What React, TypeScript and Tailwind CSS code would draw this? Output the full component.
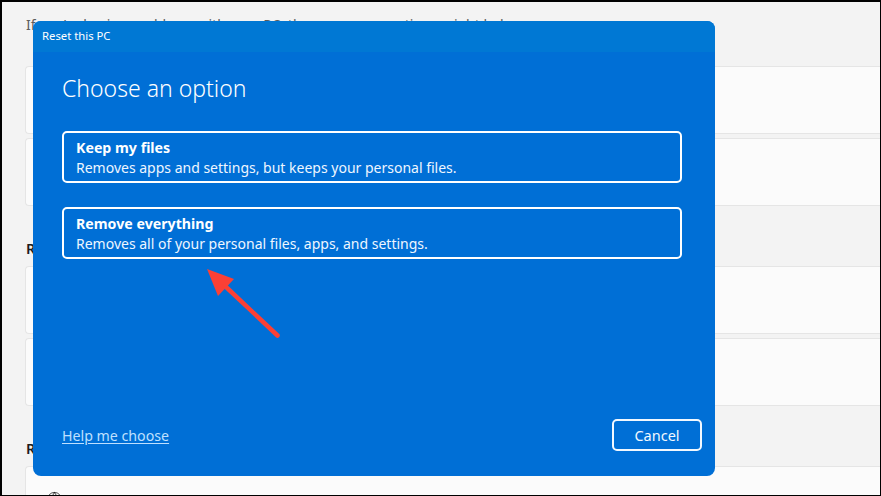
import { Globe } from "lucide-react";

const FONT = "font-['Noto_Sans','Open_Sans',sans-serif]";

function SettingsCard({ className = "" }: { className?: string }) {
  return <div className={`h-[68px] rounded-l-[4px] border border-r-0 border-[#e5e5e5] bg-[#fbfbfb] ${className}`} />;
}

function OptionButton({ title, description }: { title: string; description: string }) {
  return (
    <button
      type="button"
      className="flex h-[52px] w-full flex-col justify-center rounded-[5px] border-2 border-white px-[12px] pt-[2px] text-left text-white"
    >
      <span className="text-[14.2px] leading-[20px] font-bold">{title}</span>
      <span className="text-[14px] leading-[20px] text-[#eef6ff]">{description}</span>
    </button>
  );
}

export default function App() {
  return (
    <div className={`relative h-[496px] w-[881px] overflow-hidden bg-black pt-[2px] pb-px pl-[2px] pr-px ${FONT}`}>
      {/* settings page behind the dialog */}
      <div className="h-full overflow-hidden bg-[#f3f3f3] pl-[23px]">
        <p className="pt-[13px] pb-[32px] pl-px text-[14px] leading-[19px] whitespace-nowrap text-[#5c5c5c]">
          If you're having problems with your PC, these recovery options might help.
        </p>
        <div className="flex flex-col gap-[4px]">
          <SettingsCard />
          <SettingsCard />
        </div>
        <p className="pt-[32px] pb-[8px] pl-px text-[14.5px] leading-[20px] font-semibold text-[#1b1b1b]">Recovery</p>
        <div className="flex flex-col gap-[4px]">
          <SettingsCard />
          <SettingsCard />
        </div>
        <p className="pt-[32px] pb-[8px] pl-px text-[14.5px] leading-[20px] font-semibold text-[#1b1b1b]">Related support</p>
        <div className="h-[68px] rounded-l-[4px] border border-r-0 border-[#e5e5e5] bg-[#fbfbfb] pt-[24px] pl-[20px]">
          <Globe size={17} strokeWidth={1.1} className="text-[#1b1b1b]" />
        </div>
      </div>

      {/* Reset this PC dialog */}
      <div className="absolute top-[21px] left-[33px] flex h-[455px] w-[682px] flex-col overflow-hidden rounded-[8px] bg-[#006fd6] text-white">
        <div className="flex h-[31px] shrink-0 items-center bg-[#0078d4] pl-[9px] text-[11.3px]">Reset this PC</div>
        <div className="flex min-h-0 flex-1 flex-col pt-[20px] pr-[13px] pb-[25px] pl-[29px]">
          <h1 className="text-[23px] leading-[32px] font-light">Choose an option</h1>
          <div className="mt-[27px] flex flex-col gap-[24px] pr-[20px]">
            <OptionButton title="Keep my files" description="Removes apps and settings, but keeps your personal files." />
            <OptionButton
              title="Remove everything"
              description="Removes all of your personal files, apps, and settings."
            />
          </div>
          <div className="mt-auto flex items-center justify-between">
            <a className="pt-[2px] text-[14.2px] leading-[18px] text-[#bfe0ff] underline underline-offset-2">Help me choose</a>
            <button
              type="button"
              className="h-[32px] w-[90px] rounded-[5px] border-2 border-[#f2f8ff] pt-[2px] text-[14.5px] text-[#f2f8ff]"
            >
              Cancel
            </button>
          </div>
        </div>
      </div>

      {/* red annotation arrow */}
      <svg className="absolute top-[260px] left-[200px]" width="90" height="85" viewBox="200 260 90 85">
        <path d="M207 269 L234 279 L218 296 Z" fill="#fb4035" />
        <path d="M225 286 L277.5 335.5" stroke="#fb4035" strokeWidth="4.5" strokeLinecap="round" fill="none" />
      </svg>
    </div>
  );
}
